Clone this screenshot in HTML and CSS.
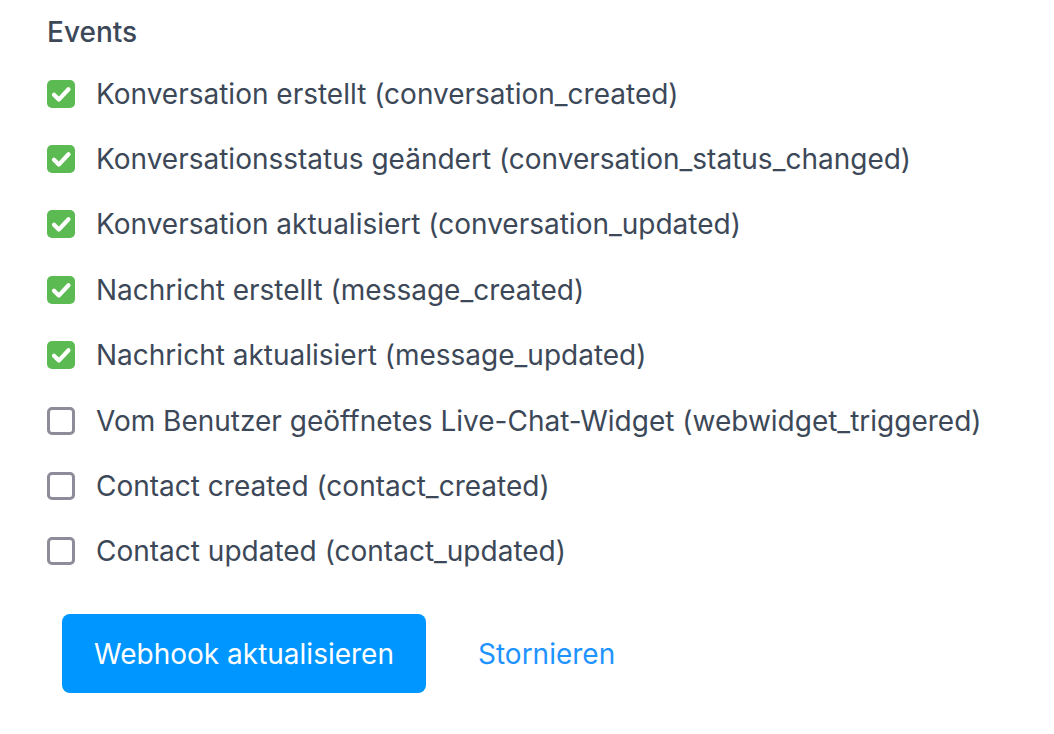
FILE: index.html
```html
<!DOCTYPE html>
<html lang="de">
<head>
<meta charset="utf-8">
<link rel="stylesheet" href="styles.css">
</head>
<body>
<div class="form">
  <div class="label">Events</div>
  <ul class="events">
    <li class="event"><span class="box checked"><svg viewBox="0 0 28 28"><path d="M7 14.8l4.8 4.8L21.5 9.2" /></svg></span><span>Konversation erstellt (conversation_created)</span></li>
    <li class="event"><span class="box checked"><svg viewBox="0 0 28 28"><path d="M7 14.8l4.8 4.8L21.5 9.2" /></svg></span><span>Konversationsstatus geändert (conversation_status_changed)</span></li>
    <li class="event"><span class="box checked"><svg viewBox="0 0 28 28"><path d="M7 14.8l4.8 4.8L21.5 9.2" /></svg></span><span>Konversation aktualisiert (conversation_updated)</span></li>
    <li class="event"><span class="box checked"><svg viewBox="0 0 28 28"><path d="M7 14.8l4.8 4.8L21.5 9.2" /></svg></span><span>Nachricht erstellt (message_created)</span></li>
    <li class="event"><span class="box checked"><svg viewBox="0 0 28 28"><path d="M7 14.8l4.8 4.8L21.5 9.2" /></svg></span><span>Nachricht aktualisiert (message_updated)</span></li>
    <li class="event"><span class="box"></span><span>Vom Benutzer geöffnetes Live-Chat-Widget (webwidget_triggered)</span></li>
    <li class="event"><span class="box"></span><span>Contact created (contact_created)</span></li>
    <li class="event"><span class="box"></span><span>Contact updated (contact_updated)</span></li>
  </ul>
  <div class="actions">
    <button class="btn primary">Webhook aktualisieren</button>
    <button class="btn link">Stornieren</button>
  </div>
</div>
</body>
</html>
```
FILE: styles.css
```css
html, body {
  margin: 0;
  padding: 0;
  background: #ffffff;
}
body {
  font-family: Inter, "Noto Sans", sans-serif;
  color: #3c4858;
}
.form {
  padding: 15px 0 0 47px;
}
.label {
  font-size: 28px;
  line-height: 34px;
  color: #3c4858;
  font-weight: 500;
}
.events {
  list-style: none;
  margin: 0;
  padding: 12px 0 0 0;
}
.event {
  display: flex;
  align-items: center;
  height: 65.4px;
  font-size: 28px;
  color: #3c4858;
}
.box {
  box-sizing: border-box;
  width: 28px;
  height: 28px;
  border: 3.8px solid #8e8c99;
  border-radius: 5px;
  margin-right: 21px;
  flex: none;
  display: flex;
}
.box.checked {
  border: none;
  background: #5cba52;
}
.box svg {
  width: 28px;
  height: 28px;
}
.box svg path {
  fill: none;
  stroke: #ffffff;
  stroke-width: 4.2;
  stroke-linecap: round;
  stroke-linejoin: round;
}
.actions {
  display: flex;
  align-items: center;
  padding: 30px 0 0 15px;
  gap: 18px;
}
.btn {
  font-family: Inter, "Noto Sans", sans-serif;
  font-size: 28px;
  border: none;
  cursor: pointer;
}
.primary {
  background: #0096ff;
  color: #ffffff;
  height: 79px;
  width: 364px;
  border-radius: 8px;
}
.link {
  background: transparent;
  color: #1f93ff;
  padding: 0 34px;
}
```
